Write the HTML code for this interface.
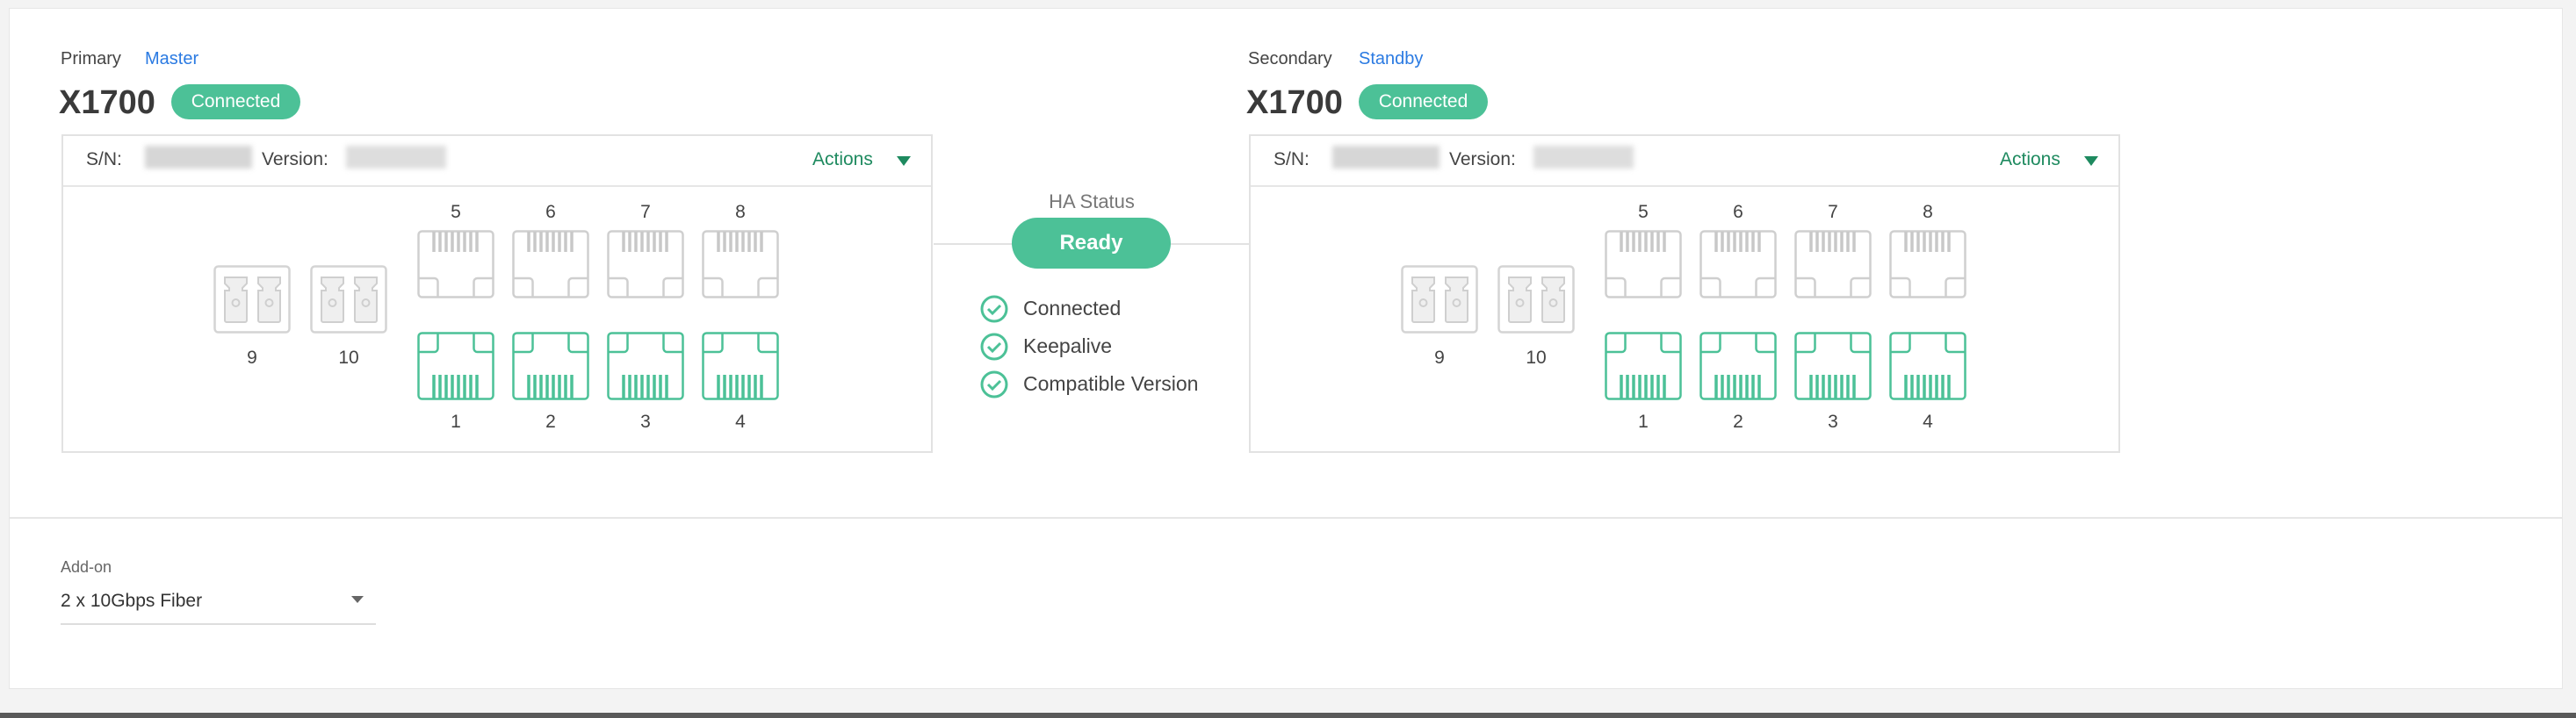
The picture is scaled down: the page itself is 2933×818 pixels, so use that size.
<!DOCTYPE html>
<html><head><meta charset="utf-8"><style>
*{margin:0;padding:0;box-sizing:border-box}
body{width:2933px;height:818px;background:#f3f3f3;position:relative;overflow:hidden;font-family:"Liberation Sans",sans-serif;color:#333}
.card{position:absolute;left:10px;top:9px;width:2908px;height:776px;background:#fff;border:1px solid #e6e6e6}
.a{position:absolute;white-space:nowrap}
.badge{position:absolute;height:40px;width:147px;border-radius:20px;background:#4cc197;color:#fff;font-size:21px;text-align:center;line-height:40px}
.box{position:absolute;width:992px;height:363px;border:2px solid #e2e2e2;background:#fff}
.blur{position:absolute;background:#d6d6d6;filter:blur(3px);height:26px}
.gport{position:absolute;width:88px;height:78px}
.green{color:#1e8a5f}
</style></head><body>
<div class="card"></div>
<div class="a" style="left:0;top:812px;width:2933px;height:6px;background:#595959"></div>
<div class="a" style="left:11px;top:589px;width:2906px;height:2px;background:#e6e6e6"></div>

<div class="a" style="left:69px;top:636px;font-size:18px;color:#666">Add-on</div>
<div class="a" style="left:69px;top:673px;font-size:21px;color:#333">2 x 10Gbps Fiber</div>
<div class="a" style="left:400px;top:679px;width:0;height:0;border-left:7px solid transparent;border-right:7px solid transparent;border-top:8px solid #666"></div>
<div class="a" style="left:69px;top:710px;width:359px;height:2px;background:#ddd"></div>

<!-- HA -->
<div class="a" style="left:1063px;top:277px;width:359px;height:2px;background:#e2e2e2"></div>
<div class="a" style="left:1143px;top:217px;width:200px;text-align:center;font-size:22px;color:#777">HA Status</div>
<div class="badge" style="left:1152px;top:248px;width:181px;height:58px;border-radius:29px;line-height:58px;font-size:24px;font-weight:bold">Ready</div>
<svg class="a" style="left:1115px;top:335px" width="36" height="120" viewBox="0 0 36 120">
<g fill="none" stroke="#4cc197" stroke-width="3"><circle cx="17" cy="17" r="14"/><path d="M10 17l5 5 9-9"/><circle cx="17" cy="60" r="14"/><path d="M10 60l5 5 9-9"/><circle cx="17" cy="103" r="14"/><path d="M10 103l5 5 9-9"/></g></svg>
<div class="a" style="left:1165px;top:338px;font-size:23px;color:#444">Connected</div>
<div class="a" style="left:1165px;top:381px;font-size:23px;color:#444">Keepalive</div>
<div class="a" style="left:1165px;top:424px;font-size:23px;color:#444">Compatible Version</div>

<svg width="0" height="0" style="position:absolute"><defs>
<g id="gp" fill="none" stroke="#cfcfcf" stroke-width="2.5"><rect x="1.5" y="1.5" width="85" height="75" rx="4"/><path d="M1.5 55h18a4 4 0 0 1 4 4v17.5M86.5 55h-18a4 4 0 0 0-4 4v17.5"/><g stroke="#c8c8c8" stroke-width="3.5"><path d="M19 2v23M26 2v23M33 2v23M40 2v23M47 2v23M54 2v23M61 2v23M68 2v23"/></g></g>
<g id="pp" fill="none" stroke="#4cc197" stroke-width="2.5"><rect x="1.5" y="1.5" width="85" height="75" rx="4"/><path d="M1.5 23h18a4 4 0 0 0 4-4V1.5M86.5 23h-18a4 4 0 0 1-4-4V1.5"/><g stroke-width="3.5"><path d="M19 76V49M26 76V49M33 76V49M40 76V49M47 76V49M54 76V49M61 76V49M68 76V49"/></g></g>
<g id="sfp"><rect x="1.5" y="1.5" width="85" height="75" rx="4" fill="none" stroke="#d4d4d4" stroke-width="2.5"/><g fill="#efefef" stroke="#cfcfcf" stroke-width="2"><path d="M13 14h25v7l-5 5v3h5v34a2 2 0 0 1-2 2H15a2 2 0 0 1-2-2V29h5v-3l-5-5z"/><path d="M51 14h25v7l-5 5v3h5v34a2 2 0 0 1-2 2H53a2 2 0 0 1-2-2V29h5v-3l-5-5z"/></g><circle cx="25.5" cy="43" r="4" fill="none" stroke="#cfcfcf" stroke-width="2"/><circle cx="63.5" cy="43" r="4" fill="none" stroke="#cfcfcf" stroke-width="2"/></g>
</defs></svg>

<!-- LEFT DEVICE -->
<div id="L">
<div class="a" style="left:69px;top:56px;font-size:20px;color:#444">Primary</div>
<div class="a" style="left:165px;top:56px;font-size:20px;color:#2a7ae2">Master</div>
<div class="a" style="left:67px;top:96px;font-size:38px;font-weight:bold;color:#3a3a3a">X1700</div>
<div class="badge" style="left:195px;top:96px">Connected</div>
<div class="box" style="left:70px;top:153px"></div>
<div class="a" style="left:72px;top:211px;width:988px;height:2px;background:#e6e6e6"></div>
<div class="a" style="left:98px;top:170px;font-size:21px;color:#444">S/N:</div>
<div class="blur" style="left:165px;top:166px;width:122px"></div>
<div class="a" style="left:298px;top:170px;font-size:21px;color:#444">Version:</div>
<div class="blur" style="left:394px;top:166px;width:114px;background:#ddd"></div>
<div class="a green" style="left:925px;top:170px;font-size:21px">Actions</div>
<div class="a" style="left:1021px;top:178px;border-left:8px solid transparent;border-right:8px solid transparent;border-top:11px solid #1e8a5f"></div>
<svg class="a" style="left:243px;top:302px" width="200" height="80"><use href="#sfp"/><use href="#sfp" x="110"/></svg>
<div class="a" style="left:267px;top:396px;width:40px;text-align:center;font-size:21px;color:#444">9</div>
<div class="a" style="left:377px;top:396px;width:40px;text-align:center;font-size:21px;color:#444">10</div>
<svg class="a" style="left:475px;top:262px" width="440" height="200"><use href="#gp"/><use href="#gp" x="108"/><use href="#gp" x="216"/><use href="#gp" x="324"/><use href="#pp" y="116"/><use href="#pp" x="108" y="116"/><use href="#pp" x="216" y="116"/><use href="#pp" x="324" y="116"/></svg>
<div class="a" style="left:499px;top:230px;width:40px;text-align:center;font-size:21px;color:#444">5</div>
<div class="a" style="left:607px;top:230px;width:40px;text-align:center;font-size:21px;color:#444">6</div>
<div class="a" style="left:715px;top:230px;width:40px;text-align:center;font-size:21px;color:#444">7</div>
<div class="a" style="left:823px;top:230px;width:40px;text-align:center;font-size:21px;color:#444">8</div>
<div class="a" style="left:499px;top:469px;width:40px;text-align:center;font-size:21px;color:#444">1</div>
<div class="a" style="left:607px;top:469px;width:40px;text-align:center;font-size:21px;color:#444">2</div>
<div class="a" style="left:715px;top:469px;width:40px;text-align:center;font-size:21px;color:#444">3</div>
<div class="a" style="left:823px;top:469px;width:40px;text-align:center;font-size:21px;color:#444">4</div>
</div>

<!-- RIGHT DEVICE -->
<div style="position:absolute;left:1352px;top:0;width:1200px;height:600px">
<div class="a" style="left:69px;top:56px;font-size:20px;color:#444">Secondary</div>
<div class="a" style="left:195px;top:56px;font-size:20px;color:#2a7ae2">Standby</div>
<div class="a" style="left:67px;top:96px;font-size:38px;font-weight:bold;color:#3a3a3a">X1700</div>
<div class="badge" style="left:195px;top:96px">Connected</div>
<div class="box" style="left:70px;top:153px"></div>
<div class="a" style="left:72px;top:211px;width:988px;height:2px;background:#e6e6e6"></div>
<div class="a" style="left:98px;top:170px;font-size:21px;color:#444">S/N:</div>
<div class="blur" style="left:165px;top:166px;width:122px"></div>
<div class="a" style="left:298px;top:170px;font-size:21px;color:#444">Version:</div>
<div class="blur" style="left:394px;top:166px;width:114px;background:#ddd"></div>
<div class="a green" style="left:925px;top:170px;font-size:21px">Actions</div>
<div class="a" style="left:1021px;top:178px;border-left:8px solid transparent;border-right:8px solid transparent;border-top:11px solid #1e8a5f"></div>
<svg class="a" style="left:243px;top:302px" width="200" height="80"><use href="#sfp"/><use href="#sfp" x="110"/></svg>
<div class="a" style="left:267px;top:396px;width:40px;text-align:center;font-size:21px;color:#444">9</div>
<div class="a" style="left:377px;top:396px;width:40px;text-align:center;font-size:21px;color:#444">10</div>
<svg class="a" style="left:475px;top:262px" width="440" height="200"><use href="#gp"/><use href="#gp" x="108"/><use href="#gp" x="216"/><use href="#gp" x="324"/><use href="#pp" y="116"/><use href="#pp" x="108" y="116"/><use href="#pp" x="216" y="116"/><use href="#pp" x="324" y="116"/></svg>
<div class="a" style="left:499px;top:230px;width:40px;text-align:center;font-size:21px;color:#444">5</div>
<div class="a" style="left:607px;top:230px;width:40px;text-align:center;font-size:21px;color:#444">6</div>
<div class="a" style="left:715px;top:230px;width:40px;text-align:center;font-size:21px;color:#444">7</div>
<div class="a" style="left:823px;top:230px;width:40px;text-align:center;font-size:21px;color:#444">8</div>
<div class="a" style="left:499px;top:469px;width:40px;text-align:center;font-size:21px;color:#444">1</div>
<div class="a" style="left:607px;top:469px;width:40px;text-align:center;font-size:21px;color:#444">2</div>
<div class="a" style="left:715px;top:469px;width:40px;text-align:center;font-size:21px;color:#444">3</div>
<div class="a" style="left:823px;top:469px;width:40px;text-align:center;font-size:21px;color:#444">4</div>
</div>
</body></html>
